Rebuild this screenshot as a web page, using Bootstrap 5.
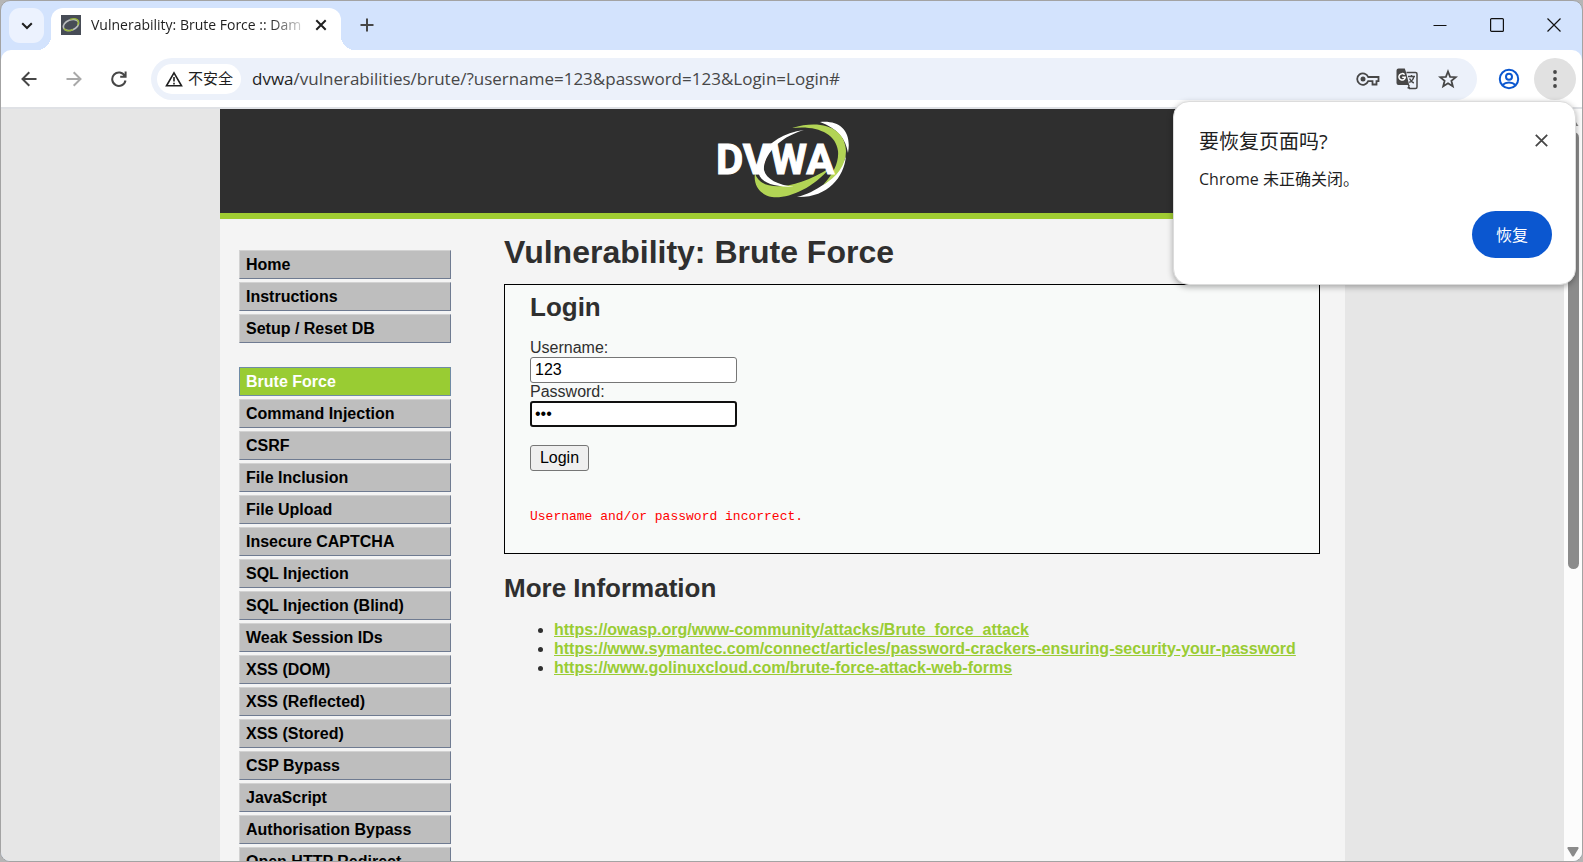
<!DOCTYPE html>
<html lang="zh-CN">
<head>
<meta charset="utf-8">
<meta name="viewport" content="width=device-width, initial-scale=1">
<title>Vulnerability: Brute Force :: Damn Vulnerable Web Application (DVWA)</title>
<link rel="stylesheet" href="https://cdn.jsdelivr.net/npm/bootstrap@5.3.0/dist/css/bootstrap.min.css">
<style>
body{background:#b5b5b5;font-family:"Open Sans","Noto Sans CJK SC",sans-serif;color:#1f1f1f}
button{font-family:inherit}
.win{border:1px solid #a3a3a3;border-radius:10px;background:#d3e3fd}
.tabstrip{height:49px;padding:7px 0 0 8px}
.plain{border:0;background:none;padding:0;display:flex;align-items:center;justify-content:center;color:#474747;flex:none}
.tab-search{width:35px;height:35px;border-radius:11px;background:#ecf2fe;color:#1f1f1f}
.tab{width:290px;margin-left:7px;padding:0 14px 8px 10px;background:#fff;border-radius:12px 12px 0 0;position:relative}
.tab::before,.tab::after{content:"";position:absolute;bottom:0;width:14px;height:14px}
.tab::before{right:100%;background:radial-gradient(circle at 0 0,transparent 14px,#fff 14px)}
.tab::after{left:100%;background:radial-gradient(circle at 100% 0,transparent 14px,#fff 14px)}
.tab-title{font-size:14px;line-height:20px;white-space:nowrap;margin-left:10px;-webkit-mask-image:linear-gradient(90deg,#000 85%,#0003)}
.new-tab{width:52px;padding-bottom:8px}
.win-btn{width:57px;padding-bottom:8px;color:#111}
.toolbar{height:59px;background:#fff;border-bottom:2px solid #dfe1e5;border-radius:10px 10px 0 0;padding:0 6px 0 5px}
.nav-btn{width:45px;height:42px}
.omni{height:42px;background:#ecf1fa;border-radius:21px;padding:0 19px 0 6px;margin-left:10px}
.chip{height:30px;width:84px;background:#fff;border-radius:15px;font-size:15px;color:#1f1f1f;gap:5px}
.url{font-size:17px;color:#474747;min-width:0;margin-left:11px}
.url b{font-weight:400;color:#1f1f1f}
.profile{margin-left:21px}
.dots{width:42px;height:42px;border-radius:50%;background:#e1e1e1;margin-left:14px}
.view{background:#e6e6e6;min-height:0}
.track{width:18px;background:#fcfcfc;padding:8px 3px 4px}
.thumb{height:437px;width:11px;background:#8b8b8b;border-radius:6px;margin-top:5px}
.site{max-width:1125px;background:#f4f4f4;font-family:"Liberation Sans",Arial,sans-serif;font-size:16px;line-height:18px;color:#2f2f2f;overflow:hidden}
.site-head{background:#2f2f2f;border-bottom:6px solid #a0cc32;height:110px;padding-top:11px}
.menu{width:212px;margin:31px 0 0 19px;flex:none}
.menu ul{gap:3px;margin-bottom:24px}
.menu a{display:block;height:29px;padding:5px 6px;background:#bebebe;color:#000;font-weight:700;text-decoration:none;border:1px solid;border-color:#d2d2d2 #6f7b91 #6f7b91 #d2d2d2}
.menu a.on{background:#9c3;color:#fff;border-color:#6f8ba5}
.main{margin:0 25px 0 53px;padding-top:14px;flex:1;min-width:0}
.main h1{font-size:32px;line-height:38px;font-weight:700;margin:0 0 13px}
.main h2{font-size:26px;line-height:30px;font-weight:700;margin:0}
.vuln{background:#f8faf9;border:1px solid #000;padding:7px 25px 27px}
.vuln form{margin-top:17px}
.field{display:block;width:207px;height:26px;border:1px solid #767676;border-radius:3px;padding:1px 4px;background:#fff;color:#000;line-height:20px}
.field.current{border:2px solid #101010;padding:0 3px}
.field:focus{outline:0}
.login{border:1px solid #767676;border-radius:3px;background:#efefef;color:#000;width:59px;height:26px;padding:0;margin-top:18px}
.err{font:13px/18px "Liberation Mono",monospace;color:#f00;margin:37px 0 0}
.vuln + h2{margin-top:19px}
.more{padding-left:50px;margin-top:17px;line-height:19px}
.more a{color:#9c3;font-weight:700}
.bubble{position:absolute;z-index:5;top:100px;right:6px;width:403px;height:184px;background:#fff;border-radius:16px;border:1px solid #dcdcdc;box-shadow:0 2px 6px #0005;padding:26px 23px 26px 25px}
.bubble h2{font-size:20px;line-height:28px;margin:0;font-weight:400}
.bubble p{font-size:16px;line-height:24px;margin:11px 0 0}
.dismiss{height:24px}
.restore{width:80px;height:47px;border:0;border-radius:24px;background:#0b57d0;color:#fff;font-size:16px}
</style>
<script src="https://cdn.jsdelivr.net/npm/bootstrap@5.3.0/dist/js/bootstrap.bundle.min.js"></script>
</head>
<body class="vh-100 overflow-hidden">
<div class="win vh-100 d-flex flex-column position-relative overflow-hidden">
  <div class="tabstrip d-flex flex-shrink-0">
    <button class="plain tab-search" aria-label="Search tabs"><svg width="12" height="8" viewBox="0 0 12 8" fill="none" stroke="currentColor" stroke-width="2"><path d="M1.200 1.200 6 6l4.800-4.800"/></svg></button>
    <div class="tab d-flex align-items-center justify-content-between">
      <div class="d-flex align-items-center">
        <svg width="20" height="20" viewBox="0 0 20 20"><path fill="#474c56" d="M0 0h20v20H0z"/><g fill="none"><ellipse cx="10" cy="10" rx="8" ry="5" transform="rotate(-22 10 10)" stroke="#b9bcbf" stroke-width="1.600"/><path d="M9 4.500c6-2.500 10.500 1 7.500 5.500M3 13.500c2 3 6 2.500 9 1" stroke="#9ab63c" stroke-width="1.400"/></g></svg>
        <span class="tab-title">Vulnerability: Brute Force :: Dam</span>
      </div>
      <button class="plain" aria-label="Close tab"><svg width="12" height="12" viewBox="0 0 12 12" stroke="#1f1f1f" stroke-width="2"><path d="m1.300 1.300 9.400 9.400m0-9.400-9.400 9.400"/></svg></button>
    </div>
    <button class="plain new-tab" aria-label="New tab"><svg width="14" height="14" viewBox="0 0 14 14" stroke="currentColor" stroke-width="2"><path d="M7 .5v13M.5 7h13"/></svg></button>
    <div class="ms-auto d-flex">
      <button class="plain win-btn" aria-label="Minimize"><svg width="14" height="14" viewBox="0 0 14 14" stroke="currentColor"><path d="M.5 7.500h13"/></svg></button>
      <button class="plain win-btn" aria-label="Maximize"><svg width="14" height="14" viewBox="0 0 14 14" fill="none" stroke="currentColor" stroke-width="1.200"><rect x=".6" y=".6" width="12.800" height="12.800" rx="1"/></svg></button>
      <button class="plain win-btn" aria-label="Close"><svg width="14" height="14" viewBox="0 0 14 14" stroke="currentColor" stroke-width="1.200"><path d="m.5.5 13 13m0-13-13 13"/></svg></button>
    </div>
  </div>
  <div class="toolbar d-flex align-items-center flex-shrink-0">
    <button class="plain nav-btn" aria-label="Back"><svg width="16" height="16" viewBox="0 0 16 16" fill="none" stroke="currentColor" stroke-width="2"><path d="M15.500 8H1.800M8.300 1.200 1.500 8l6.800 6.800"/></svg></button>
    <button class="plain nav-btn" aria-label="Forward"><svg width="16" height="16" viewBox="0 0 16 16" fill="none" stroke="#a9a9a9" stroke-width="2"><path d="M.5 8h13.700M7.700 1.200 14.500 8l-6.800 6.800"/></svg></button>
    <button class="plain nav-btn" aria-label="Reload"><svg width="16" height="16" viewBox="0 0 16 16" fill="none" stroke="currentColor" stroke-width="2"><path d="M13.800 5A6.700 6.700 0 1 0 14.500 9.500M14.600.5v5.200H9.200"/></svg></button>
    <div class="omni d-flex align-items-center flex-grow-1">
      <button class="plain chip"><svg width="18" height="16" viewBox="0 0 18 16" fill="none" stroke="currentColor" stroke-width="1.600"><path d="M9 1.800 16.500 14.800h-15zM9 6v4.500M9 11.800v1.600"/></svg>不安全</button>
      <div class="url flex-grow-1 text-nowrap"><b>dvwa</b>/vulnerabilities/brute/?username=123&amp;password=123&amp;Login=Login#</div>
      <div class="d-flex align-items-center gap-3">
        <button class="plain" aria-label="Passwords"><svg width="24" height="14" viewBox="0 0 24 14" fill="none" stroke="currentColor" stroke-width="1.800"><path d="M12.200 5A5.700 5.700 0 1 0 12.200 9.200H16.500V12.500h4V9.200H22.500V5z"/><circle cx="7" cy="7" r="2.500" fill="currentColor" stroke="none"/></svg></button>
        <button class="plain" aria-label="Translate"><svg width="22" height="22" viewBox="0 0 22 22"><path fill="currentColor" d="M2.500.5h6.300l1.200 3.500 3.200 13H2.500a2 2 0 0 1-2-2v-12.500a2 2 0 0 1 2-2z"/><path fill="none" stroke="currentColor" stroke-width="1.500" d="M10.500 4.500h9a1.500 1.500 0 0 1 1.500 1.500v13a1.500 1.500 0 0 1-1.500 1.500h-6l-1-3.500M12 8.500h7M15.500 7v1.500M17.800 8.500c-.5 3-2.500 5-4.500 6M13.500 10.500c1 2 2.500 3.500 4.300 4.500M13.200 17l-1.200 3.500"/><path fill="none" stroke="#fff" stroke-width="1.500" d="M8.600 6.800a3.200 3.200 0 1 0 .7 2.400H6.200"/></svg></button>
        <button class="plain ms-1" aria-label="Bookmark"><svg width="20" height="20" viewBox="0 0 20 20" fill="none" stroke="currentColor" stroke-width="1.800"><path d="m10 2.500 2.100 5.300 5.700.4-4.400 3.600 1.400 5.500L10 14.300l-4.800 3 1.400-5.500L2.200 8.200l5.700-.4z"/></svg></button>
      </div>
    </div>
    <button class="plain profile" aria-label="Profile"><svg width="22" height="22" viewBox="0 0 22 22" fill="none" stroke="#0b57d0" stroke-width="2"><circle cx="11" cy="11" r="9.200"/><circle cx="11" cy="8.700" r="3"/><path d="M4.500 17c3.500-3.200 9.500-3.200 13 0"/></svg></button>
    <button class="plain dots" aria-label="Menu"><svg width="4" height="18" viewBox="0 0 4 18" fill="currentColor"><circle cx="2" cy="2" r="1.900"/><circle cx="2" cy="9" r="1.900"/><circle cx="2" cy="16" r="1.900"/></svg></button>
  </div>
  <div class="view d-flex flex-grow-1">
    <div class="site flex-grow-1 mx-auto">
      <header class="site-head text-center">
        <svg width="134" height="80" viewBox="0 0 134 80" role="img" aria-label="DVWA">
          <path fill="#fff" d="M104 2c20-2 32 9 28 31-2-14-11-25-28-31zM130 36c-2 22-19 42-49 41 17-4 41-18 49-41z"/>
          <path fill="#b2d455" d="M76 8c30-9 53 0 54 23 0 14-9 26-23 34 11-12 16-23 15-34-2-18-22-26-46-23z"/>
          <path fill="#b2d455" d="M39 53c5 19 38 18 75-5-18 21-42 31-58 29-12-2-19-12-17-24z"/>
          <path fill="#fff" d="M88 10C60 18 47 38 48 50c2 9 14 15 30 17-23 0-35-5-36-17C40 34 58 14 88 10z"/>
          <text x="0" y="54" font-family="Liberation Sans Narrow, Roboto, sans-serif" font-weight="700" font-size="42" fill="#fff" stroke="#fff" stroke-width="1">DVWA</text>
        </svg>
      </header>
      <div class="d-flex">
        <nav class="menu">
          <ul class="list-unstyled d-flex flex-column"><li><a href="#">Home</a></li><li><a href="#">Instructions</a></li><li><a href="#">Setup / Reset DB</a></li></ul>
          <ul class="list-unstyled d-flex flex-column"><li><a href="#" class="on">Brute Force</a></li><li><a href="#">Command Injection</a></li><li><a href="#">CSRF</a></li><li><a href="#">File Inclusion</a></li><li><a href="#">File Upload</a></li><li><a href="#">Insecure CAPTCHA</a></li><li><a href="#">SQL Injection</a></li><li><a href="#">SQL Injection (Blind)</a></li><li><a href="#">Weak Session IDs</a></li><li><a href="#">XSS (DOM)</a></li><li><a href="#">XSS (Reflected)</a></li><li><a href="#">XSS (Stored)</a></li><li><a href="#">CSP Bypass</a></li><li><a href="#">JavaScript</a></li><li><a href="#">Authorisation Bypass</a></li><li><a href="#">Open HTTP Redirect</a></li></ul>
        </nav>
        <main class="main">
          <h1>Vulnerability: Brute Force</h1>
          <section class="vuln">
            <h2>Login</h2>
            <form>
              <label class="d-block" for="user">Username:</label>
              <input class="field" id="user" type="text" value="123">
              <label class="d-block" for="pass">Password:</label>
              <input class="field current" id="pass" type="password" value="123">
              <button class="login d-block" type="button">Login</button>
            </form>
            <p class="err">Username and/or password incorrect.</p>
          </section>
          <h2>More Information</h2>
          <ul class="more"><li><a href="#">https://owasp.org/www-community/attacks/Brute_force_attack</a></li><li><a href="#">https://www.symantec.com/connect/articles/password-crackers-ensuring-security-your-password</a></li><li><a href="#">https://www.golinuxcloud.com/brute-force-attack-web-forms</a></li></ul>
        </main>
      </div>
    </div>
    <div class="track d-flex flex-column align-items-center flex-shrink-0">
      <svg width="12" height="10" viewBox="0 0 12 10"><path fill="#8b8b8b" d="M6 .5 11.500 9H.5z"/></svg>
      <div class="thumb"></div>
      <svg class="mt-auto" width="12" height="10" viewBox="0 0 12 10"><path fill="#8b8b8b" d="M1 0h10q1 .5.500 1.500L7 9q-1 1-2 0L.5 1.500Q0 .5 1 0z"/></svg>
    </div>
  </div>
  <div class="bubble d-flex flex-column" role="dialog" aria-labelledby="restore-title">
    <div class="d-flex justify-content-between align-items-start"><h2 id="restore-title">要恢复页面吗?</h2><button class="plain dismiss me-1" aria-label="Dismiss"><svg width="13" height="13" viewBox="0 0 13 13" stroke="currentColor" stroke-width="1.800"><path d="m.8.8 11.400 11.400m0-11.400L.8 12.200"/></svg></button></div>
    <p>Chrome 未正确关闭。</p>
    <button class="restore mt-auto ms-auto">恢复</button>
  </div>
</div>
</body>
</html>
